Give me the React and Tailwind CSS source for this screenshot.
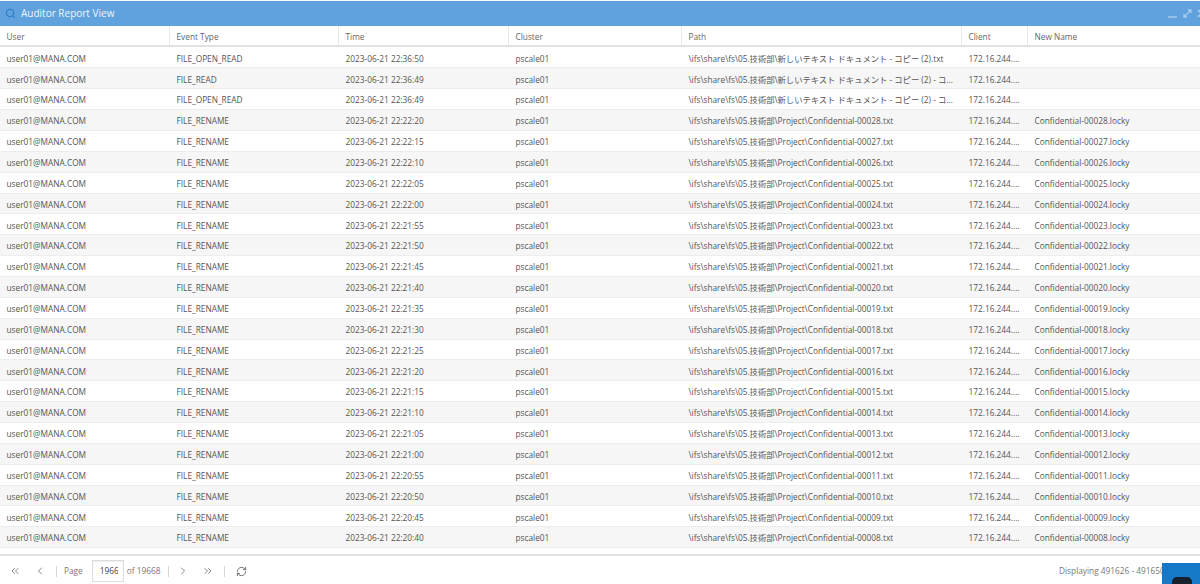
import React from "react";
import { Search, ChevronsLeft, ChevronLeft, ChevronRight, ChevronsRight, RefreshCw } from "lucide-react";

const cols = "grid grid-cols-[170px_169px_170px_173px_280px_66px_172px]";
const pad = "pl-[6.5px] pr-1 whitespace-nowrap overflow-hidden";
const headers = ["User", "Event Type", "Time", "Cluster", "Path", "Client", "New Name"];
const base = "\\ifs\\share\\fs\\05.技術部\\";
const jp = base + "新しいテキスト ドキュメント - コピー (2)";
const rows = [
  ["FILE_OPEN_READ", "2023-06-21 22:36:50", jp + ".txt", ""],
  ["FILE_READ", "2023-06-21 22:36:49", jp + " - コ...", ""],
  ["FILE_OPEN_READ", "2023-06-21 22:36:49", jp + " - コ...", ""],
];
const times = ["22:20","22:15","22:10","22:05","22:00","21:55","21:50","21:45","21:40","21:35","21:30","21:25","21:20","21:15","21:10","21:05","21:00","20:55","20:50","20:45","20:40"];
times.forEach((t, i) => {
  const n = String(28 - i).padStart(5, "0");
  rows.push(["FILE_RENAME", `2023-06-21 22:${t}`, `${base}Project\\Confidential-${n}.txt`, `Confidential-${n}.locky`]);
});

function Sep() {
  return <span className="block w-px h-[11px] bg-[#d8d8d8]" />;
}

export default function App() {
  return (
    <div className="relative w-[1200px] h-[584px] overflow-hidden bg-white text-[#555] text-[8.3px] font-['Open_Sans','Noto_Sans_CJK_JP',sans-serif] flex flex-col pt-[0.5px]">
      <div className="h-[25px] bg-[#5fa2dd] flex items-center pl-[5px] shrink-0">
        <Search size={11} strokeWidth={2.5} className="text-[#2f7fc8]" />
        <span className="ml-[5px] text-[10px] text-[#eef5fb]">Auditor Report View</span>
        <div className="ml-auto flex items-center text-[#a9cdec]">
          <svg width="9" height="9" viewBox="0 0 9 9" fill="none" stroke="currentColor" strokeWidth="1.4" className="mt-[2px]"><path d="M0 7h9" /></svg>
          <svg width="9" height="9" viewBox="0 0 9 9" fill="none" stroke="currentColor" strokeWidth="1.3" className="ml-[6px]"><path d="M1 8 8 1M5 1h3v3M1 5v3h3" /></svg>
          <svg width="9" height="9" viewBox="0 0 9 9" fill="none" stroke="currentColor" strokeWidth="1.6" className="ml-[5px] -mr-[6px] shrink-0"><path d="M1 1l7 7M8 1 1 8" /></svg>
        </div>
      </div>
      <div className={`${cols} h-[21.5px] shrink-0 border-b-2 border-[#e2e2e2] text-[#666]`}>
        {headers.map((h, i) => (
          <div key={h} className={`${pad} pt-[3px] flex items-center ${i < 6 ? "border-r border-[#e8e8e8]" : ""}`}>{h}</div>
        ))}
      </div>
      <div className="shrink-0 pt-[0.5px]">
        {rows.map((r, i) => (
          <div key={i} className={`${cols} h-[20.87px] items-center pt-[3px] border-b border-[#ededed] ${i % 2 ? "bg-[#f6f6f6]" : "bg-white"}`}>
            <div className={pad}>user01@MANA.COM</div>
            <div className={pad}>{r[0]}</div>
            <div className={pad}>{r[1]}</div>
            <div className={pad}>pscale01</div>
            <div className={pad}>{r[2]}</div>
            <div className={pad}>172.16.244....</div>
            <div className={pad}>{r[3]}</div>
          </div>
        ))}
      </div>
      <div className="mt-auto h-[30px] shrink-0 border-t-2 border-[#e2e2e2] flex items-center text-[#707070] pl-[9px] pt-[2px]">
        <ChevronsLeft size={12} strokeWidth={1.7} />
        <ChevronLeft size={12} strokeWidth={1.7} className="ml-[13px]" />
        <span className="ml-[10px]"><Sep /></span>
        <span className="ml-[7px] text-[#777]">Page</span>
        <span className="ml-[9px] w-[32px] h-[22px] border border-[#dcdcdc] flex items-center pl-[7px] text-[#444] shadow-[inset_0_1px_1px_#eee]">
          <span className="block w-[18px] overflow-hidden whitespace-nowrap">19667</span>
        </span>
        <span className="ml-[3px] text-[#777]">of 19668</span>
        <span className="ml-[8px]"><Sep /></span>
        <ChevronRight size={12} strokeWidth={1.7} className="ml-[8px]" />
        <ChevronsRight size={12} strokeWidth={1.7} className="ml-[13px]" />
        <span className="ml-[10px]"><Sep /></span>
        <RefreshCw size={11} strokeWidth={2} className="ml-[11px] text-[#666]" />
        <span className="ml-auto w-[141px] whitespace-nowrap text-[#777]">Displaying 491626 - 491650</span>
      </div>
      <div className="absolute left-[1162px] top-[563px] w-[38px] h-[21px] bg-[#1578c8] overflow-hidden">
        <div className="absolute left-[10px] top-[14px] w-[20px] h-[14px] rounded-[5px] bg-[#17202c]" />
      </div>
    </div>
  );
}
